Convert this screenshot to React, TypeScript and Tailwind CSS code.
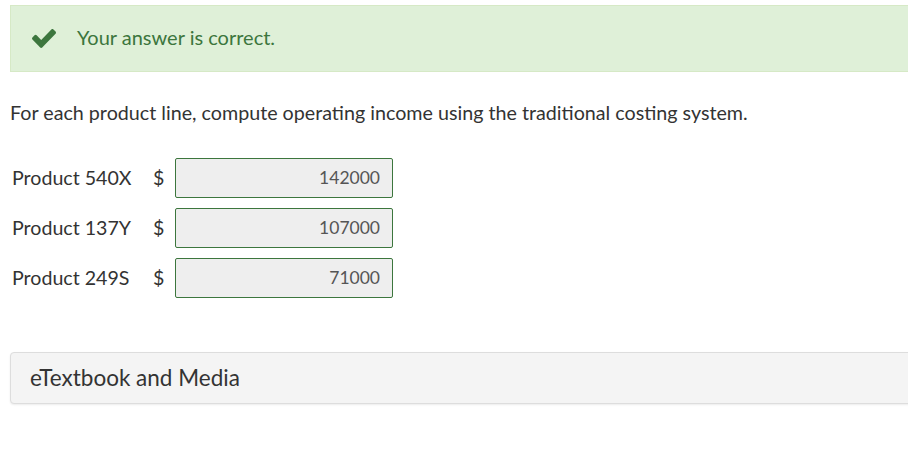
const rows = [
  { label: "Product 540X", value: "142000" },
  { label: "Product 137Y", value: "107000" },
  { label: "Product 249S", value: "71000" },
];

function CheckIcon() {
  return (
    <svg width="24" height="19" viewBox="121 338 1550 1184" preserveAspectRatio="none" fill="#3d763e">
      <path d="M1671 566q0 40-28 68l-724 724-136 136q-28 28-68 28t-68-28l-136-136-362-362q-28-28-28-68t28-68l136-136q28-28 68-28t68 28l294 295 656-657q28-28 68-28t68 28l136 136q28 28 28 68z" />
    </svg>
  );
}

export default function App() {
  return (
    <div className="h-[465px] w-[908px] overflow-hidden bg-white pt-[5px] pl-[10px] font-['Lato','Noto_Sans',sans-serif] text-[#333]">
      <div className="-mr-4 flex h-[67px] items-center border border-[#d6e9c6] bg-[#dff0d8] pl-[21px] text-[#3c763d]">
        <CheckIcon />
        <span className="mb-[4px] ml-[21px] text-[20px]">Your answer is correct.</span>
      </div>

      <p className="mt-[28px] text-[19.7px] leading-[26px]">
        For each product line, compute operating income using the traditional costing system.
      </p>

      <div className="mt-[32px] flex flex-col gap-[10px]">
        {rows.map((row) => (
          <div key={row.label} className="flex h-[40px] items-center">
            <span className="ml-[2px] w-[141px] text-[19.6px]">{row.label}</span>
            <span className="w-[22px] text-[19.6px]">$</span>
            <div className="flex h-[40px] w-[218px] items-center justify-end rounded-[2px] border border-[#3c763d] bg-[#eeeeee] pr-[12px] text-[17.5px] text-[#555]">
              {row.value}
            </div>
          </div>
        ))}
      </div>

      <div className="-mr-4 mt-[54px] flex h-[52px] items-center rounded-[4px] border border-[#dddddd] bg-[#f4f4f4] pl-[19px] shadow-[0_1px_2px_rgba(0,0,0,0.08)]">
        <span className="text-[22.5px] text-[#333]">eTextbook and Media</span>
      </div>
    </div>
  );
}
